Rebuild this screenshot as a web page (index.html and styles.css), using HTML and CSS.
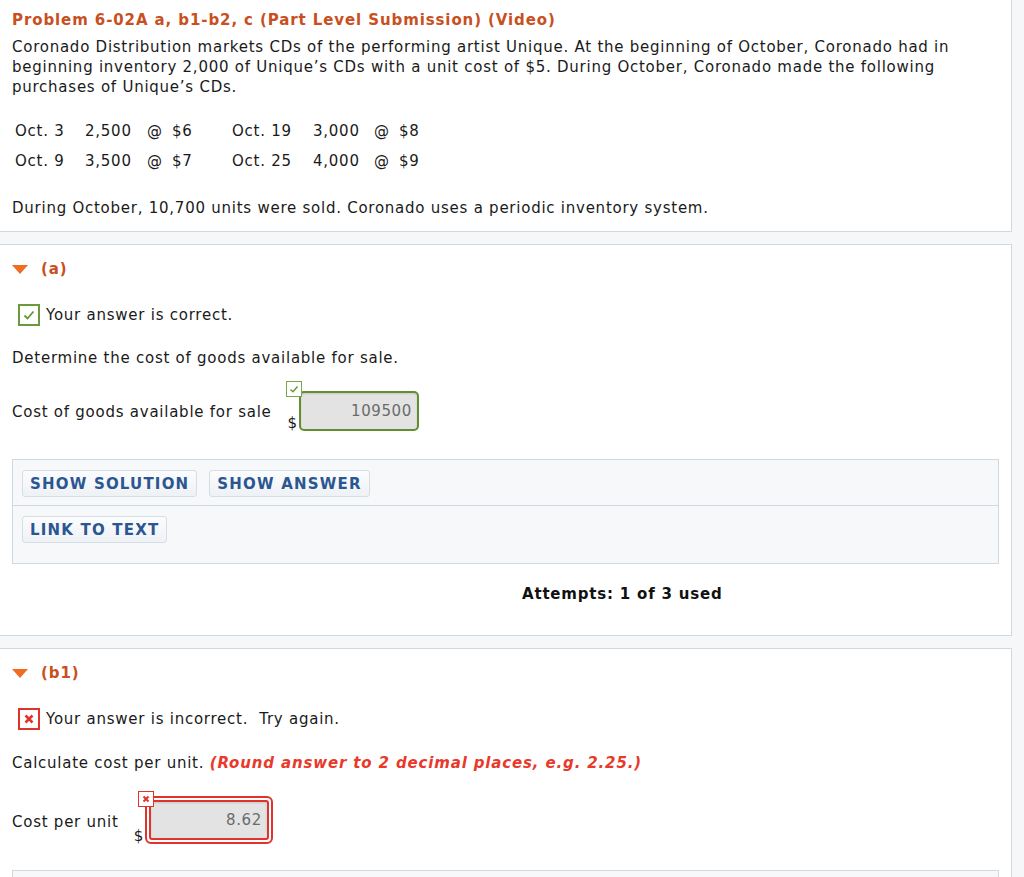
FILE: index.html
```html
<!DOCTYPE html>
<html>
<head>
<meta charset="utf-8">
<link rel="stylesheet" href="styles.css">
</head>
<body>
<div class="page">
  <div class="box intro">
    <h1 class="title">Problem 6-02A a, b1-b2, c (Part Level Submission) (Video)</h1>
    <p class="para">Coronado Distribution markets CDs of the performing artist Unique. At the beginning of October, Coronado had in beginning inventory 2,000 of Unique’s CDs with a unit cost of $5. During October, Coronado made the following purchases of Unique’s CDs.</p>
    <div class="purchases">
      <span>Oct. 3</span><span>2,500</span><span>@</span><span>$6</span>
      <span>Oct. 19</span><span>3,000</span><span>@</span><span>$8</span>
      <span>Oct. 9</span><span>3,500</span><span>@</span><span>$7</span>
      <span>Oct. 25</span><span>4,000</span><span>@</span><span>$9</span>
    </div>
    <p class="para sold">During October, 10,700 units were sold. Coronado uses a periodic inventory system.</p>
  </div>

  <div class="box part">
    <div class="part-head"><span class="tri"></span><span class="part-label">(a)</span></div>
    <div class="feedback">
      <span class="mark ok"><svg viewBox="0 0 16 16" width="16" height="16"><path d="M3.5 8.5 L6.5 11.5 L12.5 4.5" fill="none" stroke="#5f9a2e" stroke-width="1.8"/></svg></span>
      <span>Your answer is correct.</span>
    </div>
    <p class="question">Determine the cost of goods available for sale.</p>
    <div class="answer-row">
      <span class="answer-label">Cost of goods available for sale</span>
      <span class="field">
        <span class="dollar">$</span>
        <span class="input ok-input">109500</span>
        <span class="mini ok"><svg viewBox="0 0 12 12" width="12" height="12"><path d="M2.5 6.5 L5 8.8 L9.5 3.5" fill="none" stroke="#5f9a2e" stroke-width="1.4"/></svg></span>
      </span>
    </div>
    <div class="tools">
      <div class="tools-row"><span class="btn">SHOW SOLUTION</span><span class="btn">SHOW ANSWER</span></div>
      <div class="tools-row last"><span class="btn">LINK TO TEXT</span></div>
    </div>
    <div class="attempts">Attempts: 1 of 3 used</div>
  </div>

  <div class="box part">
    <div class="part-head"><span class="tri"></span><span class="part-label">(b1)</span></div>
    <div class="feedback">
      <span class="mark bad"><svg viewBox="0 0 16 16" width="16" height="16"><path d="M4.5 4.5 L11.5 11.5 M11.5 4.5 L4.5 11.5" fill="none" stroke="#e0332b" stroke-width="2.6"/></svg></span>
      <span>Your answer is incorrect.&nbsp; Try again.</span>
    </div>
    <p class="question q-b1">Calculate cost per unit. <em class="hint">(Round answer to 2 decimal places, e.g. 2.25.)</em></p>
    <div class="answer-row b1">
      <span class="answer-label">Cost per unit</span>
      <span class="field">
        <span class="dollar">$</span>
        <span class="ring"><span class="input bad-input">8.62</span></span>
        <span class="mini bad"><svg viewBox="0 0 12 12" width="12" height="12"><path d="M3.5 3.5 L8.5 8.5 M8.5 3.5 L3.5 8.5" fill="none" stroke="#e0332b" stroke-width="2"/></svg></span>
      </span>
    </div>
    <div class="tools next"></div>
  </div>
</div>
</body>
</html>
```

FILE: styles.css
```css
html, body {
  margin: 0;
  padding: 0;
  background: #f6f7f9;
}
body {
  font-family: "DejaVu Sans", Verdana, sans-serif;
  font-size: 15px;
  line-height: 20px;
  letter-spacing: 0.75px;
  color: #1a1a1a;
  height: 877px;
  overflow: hidden;
}
.page {
  width: 1012px;
}
.box {
  background: #fff;
  border: 1px solid #d2d8e2;
  border-left: none;
  margin-bottom: 12px;
  padding-left: 12px;
}
.intro {
  border-top: none;
  padding-top: 10px;
  padding-bottom: 13px;
}
.title {
  margin: 0;
  font-size: 15px;
  line-height: 20px;
  font-weight: bold;
  letter-spacing: 0.9px;
  color: #c8501f;
}
.para {
  margin: 7px 0 0;
  padding-right: 40px;
}
.purchases {
  display: grid;
  grid-template-columns: 70px 62px 25px 60px 81px 61px 25px 60px;
  grid-auto-rows: 30px;
  align-items: center;
  margin: 19px 0 0 3px;
}
.para.sold {
  margin-top: 22px;
}
.part {
  padding-top: 14px;
  padding-bottom: 31px;
}
.part-head {
  display: flex;
  align-items: center;
  height: 20px;
}
.tri {
  width: 0;
  height: 0;
  border-left: 8px solid transparent;
  border-right: 8px solid transparent;
  border-top: 9px solid #f26b22;
  margin-right: 13px;
}
.part-label {
  font-weight: bold;
  letter-spacing: 0.9px;
  color: #c8501f;
}
.feedback {
  display: flex;
  align-items: center;
  margin: 25px 0 0 6px;
  height: 22px;
}
.mark {
  width: 18px;
  height: 18px;
  box-sizing: content-box;
  border: 2px solid;
  background: #fff;
  display: flex;
  align-items: center;
  justify-content: center;
  margin-right: 6px;
}
.mark.ok { border-color: #6a9a3c; }
.mark.bad { border-color: #e0332b; }
.question {
  margin: 22px 0 0;
}
.q-b1 {
  margin-top: 23px;
}
.hint {
  color: #e8392b;
  font-weight: bold;
  letter-spacing: 0.85px;
}
.answer-row {
  display: flex;
  align-items: flex-start;
  margin-top: 13px;
}
.answer-label {
  padding-top: 21px;
  margin-right: 16px;
}
.field {
  position: relative;
  display: flex;
  align-items: flex-end;
  padding-top: 10px;
}
.dollar {
  line-height: 16px;
  margin-right: 1px;
}
.input {
  display: block;
  box-sizing: border-box;
  background: #e3e3e3;
  color: #6b6b6b;
  text-align: right;
  letter-spacing: 0.6px;
  box-shadow: inset 0 1px 2px rgba(0,0,0,0.12);
}
.ok-input {
  width: 120px;
  height: 40px;
  border: 2px solid #5f8f2e;
  border-radius: 5px;
  padding: 8px 5px 0 0;
}
.ring {
  display: block;
  border: 2px solid #e0332b;
  border-radius: 6px;
  padding: 2px;
  background: #fff;
}
.bad-input {
  width: 120px;
  height: 40px;
  border: 2px solid #e0332b;
  border-radius: 3px;
  padding: 8px 5px 0 0;
}
.mini {
  position: absolute;
  top: 0;
  left: -2px;
  width: 14px;
  height: 14px;
  border: 1.5px solid;
  background: #fff;
  display: flex;
  align-items: center;
  justify-content: center;
}
.mini.ok { border-color: #7aa64b; }
.mini.bad { border-color: #e0332b; }
.b1 {
  margin-top: 18px;
}
.b1 .field { padding-top: 5px; }
.b1 .answer-label { padding-top: 21px; margin-right: 15px; }
.b1 .mini { left: 4px; top: 0; }
.tools {
  margin-top: 28px;
  width: 985px;
  border: 1px solid #d2d8e2;
  background: #f7f8fa;
}
.tools-row {
  padding: 10px 9px 8px;
  display: flex;
  gap: 12px;
}
.tools-row + .tools-row {
  border-top: 1px solid #d2d8e2;
}
.tools-row.last {
  padding-bottom: 20px;
}
.btn {
  display: inline-block;
  height: 27px;
  box-sizing: border-box;
  padding: 4px 7px 0;
  border: 1px solid #d7dde5;
  border-radius: 3px;
  background: linear-gradient(#fbfcfd, #eef1f5);
  color: #2b5692;
  font-weight: bold;
  font-size: 15px;
  line-height: 18px;
  letter-spacing: 1.2px;
}
.attempts {
  margin: 20px 0 0 510px;
  font-weight: bold;
  letter-spacing: 0.8px;
  color: #111;
}
.tools.next {
  margin-top: 26px;
  height: 40px;
}
```
